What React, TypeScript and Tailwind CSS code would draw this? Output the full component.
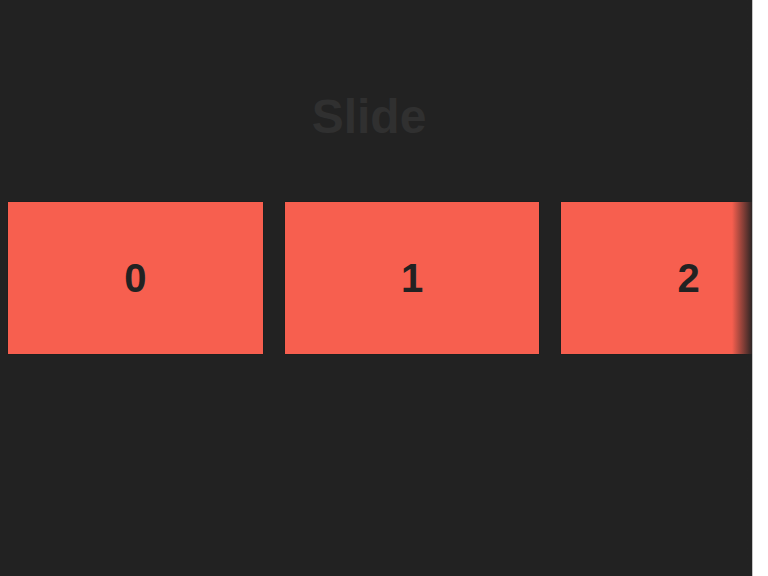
export default function App() {
  const slides = [0, 1, 2];
  return (
    <div
      className="flex h-[576px] w-[768px] overflow-hidden bg-white"
      style={{ fontFamily: '"Liberation Sans", Arial, sans-serif' }}
    >
      <div className="relative h-full w-[752px] shrink-0 overflow-hidden bg-[#222222]">
        <h1 className="mt-[93px] w-[738px] text-center text-[48px] font-bold leading-none text-[#303030]">
          Slide
        </h1>
        <div className="mt-[61px] flex gap-[22px] pl-[8px]">
          {slides.map((n) => (
            <div
              key={n}
              className="flex h-[152px] w-[254.7px] shrink-0 items-center justify-center bg-[#f75f4f] text-[40px] font-bold text-[#222222] shadow-[0_0_1px_rgba(0,0,0,0.5)]"
            >
              {n}
            </div>
          ))}
        </div>
        {/* soft edge where the track is clipped */}
        <div className="pointer-events-none absolute right-0 top-0 h-full w-[20px] bg-gradient-to-r from-transparent to-[#222222]/95" />
      </div>
      <div className="h-full w-px shrink-0 bg-[#c4c4c4]" />
    </div>
  );
}
